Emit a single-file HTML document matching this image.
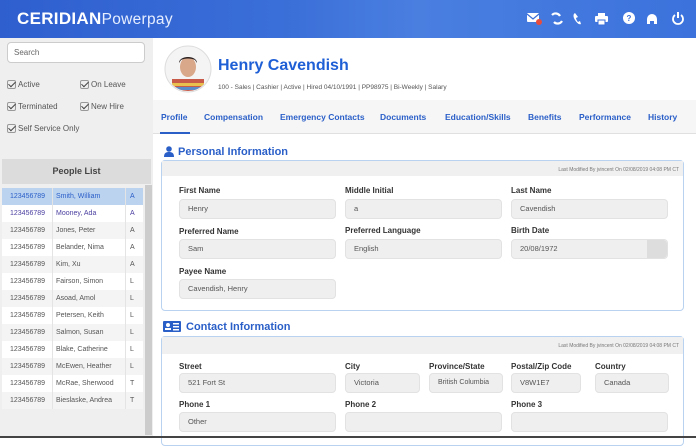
<!DOCTYPE html><html><head><style>
*{box-sizing:border-box;margin:0;padding:0}
body{width:696px;height:438px;overflow:hidden;font-family:"Liberation Sans",sans-serif;background:#fff;position:relative;color:#333}
.a{position:absolute}
.hdr{left:0;top:0;width:696px;height:38px;background:linear-gradient(90deg,#2f5fcf,#3a6ed8 40%,#4a7fe0 60%,#3b72dc)}
.side{left:0;top:38px;width:153px;height:400px;background:#efefef}
.cb{font-size:8px;color:#555}
.cb span{display:inline-block;width:9px;height:9px;border:1px solid #999;border-radius:2px;margin-right:2px;vertical-align:-2px;position:relative}
.cb span:after{content:"";position:absolute;left:2px;top:-1px;width:3px;height:6px;border:solid #444;border-width:0 1.5px 1.5px 0;transform:rotate(45deg)}
.row{position:absolute;left:2px;width:141px;height:17px;font-size:7px;color:#555;line-height:17px}
.row b{font-weight:normal;position:absolute}
.lbl{position:absolute;font-size:8px;font-weight:bold;color:#333}
.inp{position:absolute;height:20px;background:#efefef;border:1px solid #e2e2e2;border-radius:4px;font-size:7.5px;color:#555;padding-left:8px;line-height:18px}
.tab{position:absolute;top:112px;font-size:8.5px;font-weight:bold;color:#2a5fc8}
.sec{position:absolute;font-size:11px;font-weight:bold;color:#2a5fc8}
.box{position:absolute;left:161px;width:523px;border:1px solid #b9d2f0;border-radius:4px}
.strip{position:absolute;left:162px;width:521px;background:#f0f0f0;font-size:5px;color:#777;text-align:right;padding-right:4px;padding-top:6px}
</style></head><body>
<div class="a hdr"></div>
<div class="a" style="left:17px;top:9px;font-size:17px;color:#fff;letter-spacing:0.3px"><b>CERIDIAN</b><span style="font-size:15.5px;color:#e6eeff">Powerpay</span></div>
<svg class="a" style="left:524px;top:10px" width="170" height="18" viewBox="0 0 170 18" fill="#fff">
<rect x="3" y="3" width="12" height="9" rx="1"/><path d="M3 4l6 5 6-5" stroke="#3a6ed8" stroke-width="1.2" fill="none"/><circle cx="15" cy="12" r="3" fill="#e84c3d"/>
<path d="M28 5a5 5 0 0 1 8 1M38 11a5 5 0 0 1-8 1" stroke="#fff" stroke-width="2.2" fill="none"/>
<path d="M51 3c-2 1-2 4 0 7s4 5 6 4l-1-3-2 1c-1-1-2-3-2-4l2-1z"/>
<rect x="74" y="3" width="7" height="3"/><rect x="71" y="6" width="13" height="6" rx="1"/><rect x="74" y="10" width="7" height="5" stroke="#3a6ed8" stroke-width="1"/>
<circle cx="105" cy="8" r="6"/><text x="102.5" y="11" font-size="8" font-weight="bold" fill="#3a6ed8" font-family="Liberation Sans">?</text>
<path d="M123 14v-5a5 5 0 0 1 10 0v5h-3v-3h-4v3z"/>
<path d="M151 5a5 5 0 1 0 6 0" stroke="#fff" stroke-width="1.8" fill="none"/><rect x="153" y="2" width="2" height="6"/>
</svg>
<div class="a side"></div>
<div class="a" style="left:7px;top:42px;width:138px;height:21px;background:#fff;border:1px solid #ccc;border-radius:4px;font-size:8px;color:#666;padding:5px 6px">Search</div>
<div class="a cb" style="left:7px;top:80px"><span></span>Active</div>
<div class="a cb" style="left:80px;top:80px"><span></span>On Leave</div>
<div class="a cb" style="left:7px;top:102px"><span></span>Terminated</div>
<div class="a cb" style="left:80px;top:102px"><span></span>New Hire</div>
<div class="a cb" style="left:7px;top:124px"><span></span>Self Service Only</div>
<div class="a" style="left:2px;top:159px;width:149px;height:25px;background:#dcdcdc;font-size:9px;font-weight:bold;color:#444;text-align:center;line-height:25px">People List</div>
<div class="a" style="left:145px;top:185px;width:7px;height:250px;background:#ccc"></div>
<div id="rows"></div>
<script>
var d=[["Smith, William","A"],["Mooney, Ada","A"],["Jones, Peter","A"],["Belander, Nima","A"],["Kim, Xu","A"],["Fairson, Simon","L"],["Asoad, Amol","L"],["Petersen, Keith","L"],["Salmon, Susan","L"],["Blake, Catherine","L"],["McEwen, Heather","L"],["McRae, Sherwood","T"],["Bieslaske, Andrea","T"]];
var h="";d.forEach(function(r,i){var bg=i==0?"#bcd3f0":(i%2?"#fff":"#f4f4f4");var c=i==0?"#2a5fc8":(i==1?"#4a3fa0":"#555");
h+='<div class="row" style="top:'+(188+i*17)+'px;background:'+bg+';color:'+c+'"><b style="left:8px">123456789</b><b style="left:54px">'+r[0]+'</b><b style="left:128px">'+r[1]+'</b><i style="position:absolute;left:50px;top:0;width:1px;height:17px;background:#e4e4e4"></i><i style="position:absolute;left:123px;top:0;width:1px;height:17px;background:#e4e4e4"></i></div>'});
document.getElementById("rows").innerHTML=h;
</script>
<svg class="a" style="left:164px;top:45px" width="48" height="48"><defs><clipPath id="c"><circle cx="24" cy="24" r="22"/></clipPath></defs><circle cx="24" cy="24" r="23" fill="#f4f4f4" stroke="#ddd"/><g clip-path="url(#c)"><rect x="8" y="34" width="32" height="14" fill="#c85a4a"/><rect x="8" y="38" width="32" height="3" fill="#e8c050"/><rect x="8" y="42" width="32" height="3" fill="#5a8ac8"/><ellipse cx="24" cy="22" rx="8" ry="10" fill="#d9a88a"/><path d="M15 18c0-8 18-8 18 0l-2-3c-4-2-10-2-14 0z" fill="#2a2020"/></g></svg>
<div class="a" style="left:218px;top:57px;font-size:16px;font-weight:bold;color:#1f5fd6">Henry Cavendish</div>
<div class="a" style="left:218px;top:84px;font-size:6.5px;color:#555">100 - Sales | Cashier | Active | Hired 04/10/1991 | PP98975 | Bi-Weekly | Salary</div>
<div class="a" style="left:153px;top:100px;width:543px;height:34px;background:#f6f6f6;border-bottom:1px solid #e0e0e0"></div>
<div class="tab" style="left:161px">Profile</div>
<div class="a" style="left:160px;top:132px;width:30px;height:2px;background:#2a5fc8"></div>
<div class="tab" style="left:204px">Compensation</div>
<div class="tab" style="left:280px">Emergency Contacts</div>
<div class="tab" style="left:380px">Documents</div>
<div class="tab" style="left:445px">Education/Skills</div>
<div class="tab" style="left:528px">Benefits</div>
<div class="tab" style="left:579px">Performance</div>
<div class="tab" style="left:648px">History</div>
<svg class="a" style="left:164px;top:146px" width="10" height="11" fill="#2a5fc8"><circle cx="5" cy="3" r="2.8"/><path d="M0 11c0-4 2-5 5-5s5 1 5 5z"/></svg>
<div class="sec" style="left:178px;top:146px">Personal Information</div>
<div class="box" style="top:160px;height:151px"></div>
<div class="strip" style="top:161px;height:15px">Last Modified By jvincent On 02/08/2019 04:08 PM CT</div>
<div class="lbl" style="left:179px;top:186px">First Name</div><div class="inp" style="left:179px;top:199px;width:157px">Henry</div>
<div class="lbl" style="left:345px;top:186px">Middle Initial</div><div class="inp" style="left:345px;top:199px;width:157px">a</div>
<div class="lbl" style="left:511px;top:186px">Last Name</div><div class="inp" style="left:511px;top:199px;width:157px">Cavendish</div>
<div class="lbl" style="left:179px;top:227px">Preferred Name</div><div class="inp" style="left:179px;top:239px;width:157px">Sam</div>
<div class="lbl" style="left:345px;top:226px">Preferred Language</div><div class="inp" style="left:345px;top:239px;width:157px">English</div>
<div class="lbl" style="left:511px;top:226px">Birth Date</div><div class="inp" style="left:511px;top:239px;width:157px">20/08/1972</div>
<div class="a" style="left:647px;top:240px;width:20px;height:18px;background:#ddd;border-radius:0 4px 4px 0"></div>
<div class="lbl" style="left:179px;top:267px">Payee Name</div><div class="inp" style="left:179px;top:279px;width:157px">Cavendish, Henry</div>
<svg class="a" style="left:163px;top:321px" width="18" height="11"><rect x="0" y="0" width="18" height="11" rx="1" fill="#2a5fc8"/><circle cx="5" cy="4" r="2" fill="#fff"/><rect x="2" y="7" width="6" height="2" fill="#fff"/><rect x="10" y="2" width="6" height="1.5" fill="#fff"/><rect x="10" y="5" width="6" height="1.5" fill="#fff"/><rect x="10" y="8" width="6" height="1.5" fill="#fff"/></svg>
<div class="sec" style="left:186px;top:321px">Contact Information</div>
<div class="box" style="top:336px;height:110px"></div>
<div class="strip" style="top:337px;height:17px">Last Modified By jvincent On 02/08/2019 04:08 PM CT</div>
<div class="lbl" style="left:179px;top:362px">Street</div><div class="inp" style="left:179px;top:373px;width:157px">521 Fort St</div>
<div class="lbl" style="left:345px;top:362px">City</div><div class="inp" style="left:345px;top:373px;width:75px">Victoria</div>
<div class="lbl" style="left:429px;top:362px">Province/State</div><div class="inp" style="left:429px;top:373px;width:74px;font-size:7px">British Columbia</div>
<div class="lbl" style="left:511px;top:362px">Postal/Zip Code</div><div class="inp" style="left:511px;top:373px;width:70px">V8W1E7</div>
<div class="lbl" style="left:595px;top:362px">Country</div><div class="inp" style="left:595px;top:373px;width:74px">Canada</div>
<div class="lbl" style="left:179px;top:400px">Phone 1</div><div class="inp" style="left:179px;top:412px;width:157px">Other</div>
<div class="lbl" style="left:345px;top:400px">Phone 2</div><div class="inp" style="left:345px;top:412px;width:157px"></div>
<div class="lbl" style="left:511px;top:400px">Phone 3</div><div class="inp" style="left:511px;top:412px;width:157px"></div>
<div class="a" style="left:0;top:436px;width:696px;height:2px;background:#444"></div>
</body></html>
